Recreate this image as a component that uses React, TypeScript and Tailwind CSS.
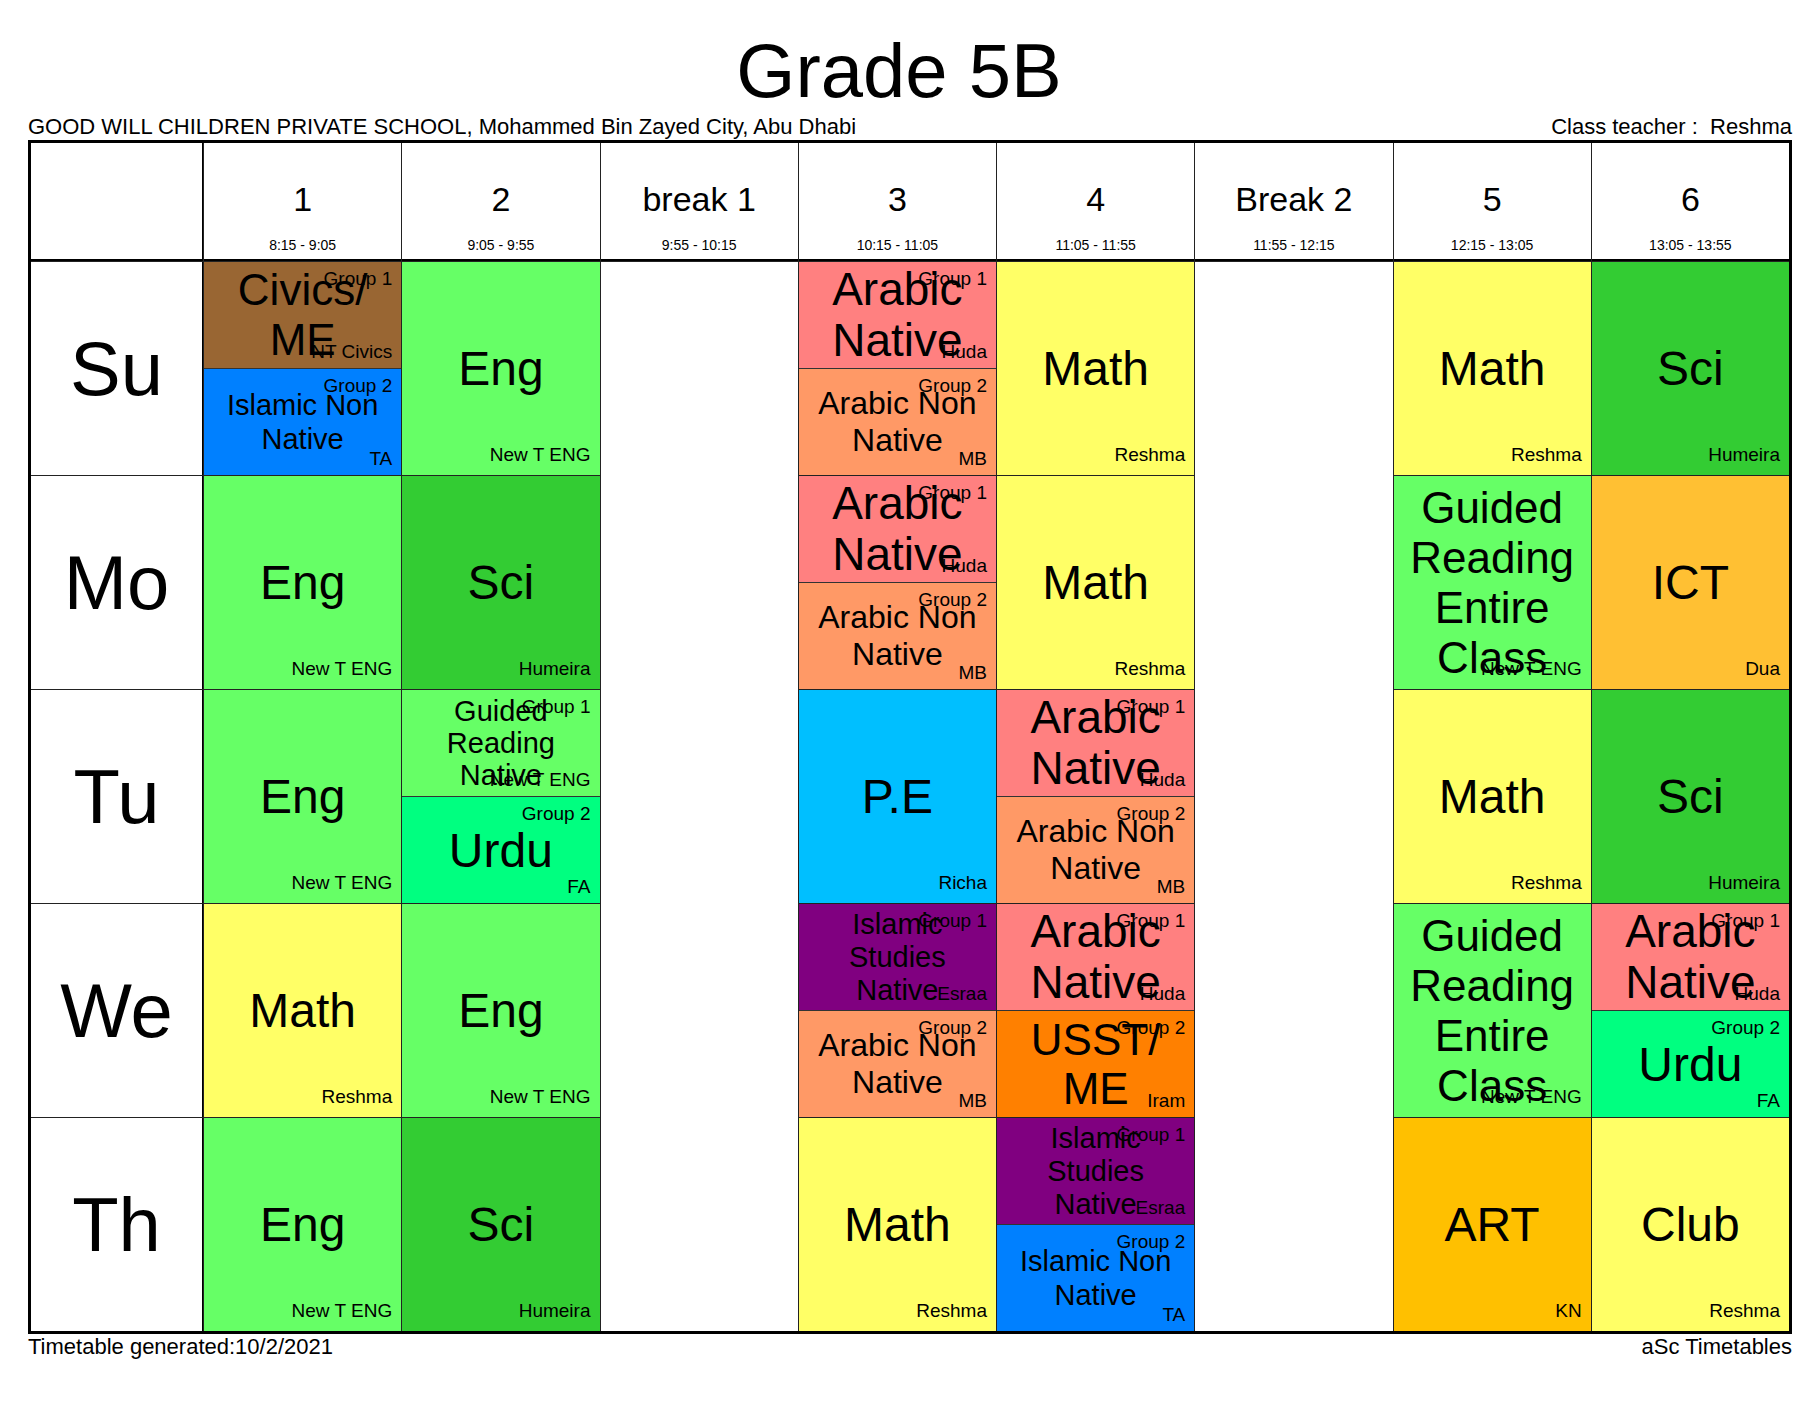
type Slot = { s: string; bg: string; t: string; cls: string };

const BIG = "text-[48px] leading-[55px]";

const eng: Slot = { s: "Eng", bg: "bg-[#66ff66]", t: "New T ENG", cls: BIG };
const sci: Slot = { s: "Sci", bg: "bg-[#33cc33]", t: "Humeira", cls: BIG };
const math: Slot = { s: "Math", bg: "bg-[#ffff66]", t: "Reshma", cls: BIG };
const arNative: Slot = { s: "Arabic Native", bg: "bg-[#ff8080]", t: "Huda", cls: "text-[46px] leading-[51px]" };
const arNon: Slot = { s: "Arabic Non Native", bg: "bg-[#ff9966]", t: "MB", cls: "text-[32px] leading-[37px]" };
const isNon: Slot = { s: "Islamic Non Native", bg: "bg-[#0080ff]", t: "TA", cls: "text-[29px] leading-[34px]" };
const isNative: Slot = { s: "Islamic Studies Native", bg: "bg-[#800080]", t: "Esraa", cls: "text-[29px] leading-[33px]" };
const urdu: Slot = { s: "Urdu", bg: "bg-[#00ff80]", t: "FA", cls: BIG };
const guidedAll: Slot = { s: "Guided Reading Entire Class", bg: "bg-[#66ff66]", t: "New T ENG", cls: "text-[44px] leading-[50px]" };
const guidedNative: Slot = { s: "Guided Reading Native", bg: "bg-[#66ff66]", t: "New T ENG", cls: "text-[29px] leading-[32px]" };
const civics: Slot = { s: "Civics/ ME", bg: "bg-[#996633]", t: "NT Civics", cls: "text-[44px] leading-[50px]" };
const usst: Slot = { s: "USST/ ME", bg: "bg-[#ff8000]", t: "Iram", cls: "text-[44px] leading-[49px]" };
const pe: Slot = { s: "P.E", bg: "bg-[#00bfff]", t: "Richa", cls: BIG };
const ict: Slot = { s: "ICT", bg: "bg-[#ffc033]", t: "Dua", cls: BIG };
const art: Slot = { s: "ART", bg: "bg-[#ffc000]", t: "KN", cls: BIG };
const club: Slot = { s: "Club", bg: "bg-[#ffff66]", t: "Reshma", cls: BIG };

const HEADERS: ReadonlyArray<[string, string]> = [
  ["1", "8:15 - 9:05"],
  ["2", "9:05 - 9:55"],
  ["break 1", "9:55 - 10:15"],
  ["3", "10:15 - 11:05"],
  ["4", "11:05 - 11:55"],
  ["Break 2", "11:55 - 12:15"],
  ["5", "12:15 - 13:05"],
  ["6", "13:05 - 13:55"],
];

// lessons per day: P1, P2, P3, P4, P5, P6 (breaks are drawn separately)
const DAYS: ReadonlyArray<{ day: string; cells: Slot[][] }> = [
  { day: "Su", cells: [[civics, isNon], [eng], [arNative, arNon], [math], [math], [sci]] },
  { day: "Mo", cells: [[eng], [sci], [arNative, arNon], [math], [guidedAll], [ict]] },
  { day: "Tu", cells: [[eng], [guidedNative, urdu], [pe], [arNative, arNon], [math], [sci]] },
  { day: "We", cells: [[math], [eng], [isNative, arNon], [arNative, usst], [guidedAll], [arNative, urdu]] },
  { day: "Th", cells: [[eng], [sci], [math], [isNative, isNon], [art], [club]] },
];

function SlotBox({ slot, group }: { slot: Slot; group?: string }) {
  return (
    <div className={`relative flex min-h-0 flex-1 items-center justify-center px-2 text-center ${slot.bg}`}>
      <span className={slot.cls}>{slot.s}</span>
      {group && (
        <span className="absolute right-[9px] top-[6px] text-[19px] leading-[22px]">{group}</span>
      )}
      <span
        className={`absolute right-[9px] text-[19px] leading-[22px] ${group ? "bottom-[5px]" : "bottom-[9px]"}`}
      >
        {slot.t}
      </span>
    </div>
  );
}

function Lesson({ slots }: { slots: Slot[] }) {
  if (slots.length === 1) {
    return (
      <div className="flex flex-col">
        <SlotBox slot={slots[0]} />
      </div>
    );
  }
  return (
    <div className="flex flex-col gap-px bg-[#333]">
      <SlotBox slot={slots[0]} group="Group 1" />
      <SlotBox slot={slots[1]} group="Group 2" />
    </div>
  );
}

export default function App() {
  return (
    <div className="min-h-screen bg-white font-['Liberation_Sans',Arial,sans-serif] text-black">
      <div className="ml-[28px] w-[1764px]">
        <h1 className="pr-[22px] pt-[33px] text-center text-[76px] leading-none">Grade 5B</h1>

        <div className="mt-[7px] flex justify-between text-[22px] leading-[22px]">
          <span>GOOD WILL CHILDREN PRIVATE SCHOOL, Mohammed Bin Zayed City, Abu Dhabi</span>
          <span className="whitespace-pre">Class teacher :  Reshma</span>
        </div>

        <div className="mt-[2px] grid grid-cols-[172px_repeat(8,minmax(0,1fr))] grid-rows-[118px_repeat(5,213px)] gap-px border-[3px] border-black bg-[#222]">
          <div className="border-b-2 border-r border-black bg-white" />
          {HEADERS.map(([num, time]) => (
            <div key={num} className="flex flex-col items-center border-b-2 border-black bg-white pt-[36px]">
              <span className="text-[34px] leading-[40px]">{num}</span>
              <span className="mt-[18px] text-[14px] leading-[16px]">{time}</span>
            </div>
          ))}

          {DAYS.map((d, i) => (
            <>
              <div key={d.day} className="flex items-center justify-center border-r border-black bg-white">
                <span className="text-[76px] leading-none">{d.day}</span>
              </div>
              <Lesson slots={d.cells[0]} />
              <Lesson slots={d.cells[1]} />
              {i === 0 && <div className="row-span-5 bg-white" />}
              <Lesson slots={d.cells[2]} />
              <Lesson slots={d.cells[3]} />
              {i === 0 && <div className="row-span-5 bg-white" />}
              <Lesson slots={d.cells[4]} />
              <Lesson slots={d.cells[5]} />
            </>
          ))}
        </div>

        <div className="mt-[2px] flex justify-between text-[22px] leading-[22px]">
          <span>Timetable generated:10/2/2021</span>
          <span>aSc Timetables</span>
        </div>
      </div>
    </div>
  );
}
